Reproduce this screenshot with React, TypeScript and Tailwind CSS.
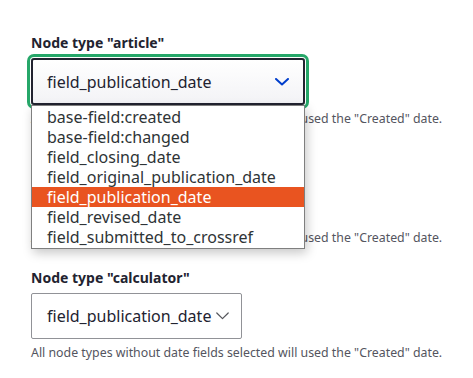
import React from "react";

const font = { fontFamily: '"Noto Sans", "DejaVu Sans", sans-serif' };

const options = [
  "base-field:created",
  "base-field:changed",
  "field_closing_date",
  "field_original_publication_date",
  "field_publication_date",
  "field_revised_date",
  "field_submitted_to_crossref",
];

const desc = 'All node types without date fields selected will used the "Created" date.';

function BlueChevron() {
  return (
    <svg width="14" height="8" viewBox="0 0 14 8" fill="none">
      <path d="M1 1l6 5.5L13 1" stroke="#003ecc" strokeWidth="2" strokeLinecap="round" strokeLinejoin="round" />
    </svg>
  );
}

function GrayChevron() {
  return (
    <svg width="13" height="8" viewBox="0 0 13 8" fill="none">
      <path d="M0.8 1l5.7 5.7L12.2 1" stroke="#55565b" strokeWidth="1.2" strokeLinecap="round" strokeLinejoin="round" />
    </svg>
  );
}

export default function App() {
  return (
    <div className="w-[473px] h-[378px] bg-white overflow-hidden pl-[31px] pt-[34px]" style={font}>
      {/* Item 1 */}
      <div className="flex flex-col">
        <div className="text-[14px] font-bold leading-[18px] text-[#222330]">Node type "article"</div>
        <div className="relative mt-[6px] w-[274px]">
          <div className="h-[47px] rounded-[3px] border-2 border-[#222330] bg-gradient-to-b from-white to-[#f3f3f6] shadow-[0_0_0_1px_#ffffff,0_0_0_4px_#26a769] flex items-center pl-[14px] pr-[14px]">
            <span className="flex-1 text-[16px] leading-[20px] text-[#222330] whitespace-nowrap">field_publication_date</span>
            <BlueChevron />
          </div>
          <div className="absolute left-0 top-[47px] w-[274px] z-10 bg-white border border-[#7f7f7f] py-[1px] shadow-[2px_4px_10px_rgba(0,0,0,0.22)]">
            {options.map((o) => (
              <div
                key={o}
                className={
                  o === "field_publication_date"
                    ? "h-[20px] leading-[20px] pl-[15px] text-[16px] bg-[#e95420] text-white whitespace-nowrap"
                    : "h-[20px] leading-[20px] pl-[15px] text-[16px] text-[#2e3436] whitespace-nowrap"
                }
              >
                {o}
              </div>
            ))}
          </div>
        </div>
        <div className="mt-[6px] text-[12.35px] leading-[16px] text-[#545560] whitespace-nowrap">{desc}</div>
      </div>

      {/* Item 2 (covered by the open list) */}
      <div className="flex flex-col mt-[26px]">
        <div className="h-[18px]" />
        <div className="mt-[6px] w-[211px] h-[47px]" />
        <div className="mt-[6px] text-[12.35px] leading-[16px] text-[#545560] whitespace-nowrap">{desc}</div>
      </div>

      {/* Item 3 */}
      <div className="flex flex-col mt-[23px]">
        <div className="text-[14px] font-bold leading-[18px] text-[#222330]">Node type "calculator"</div>
        <div className="mt-[6px] w-[211px] h-[46px] rounded-[2px] border border-[#919297] bg-white flex items-center pl-[15px] pr-[12px]">
          <span className="flex-1 text-[16px] leading-[20px] text-[#222330] whitespace-nowrap">field_publication_date</span>
          <GrayChevron />
        </div>
        <div className="mt-[6px] text-[12.35px] leading-[16px] text-[#545560] whitespace-nowrap">{desc}</div>
      </div>
    </div>
  );
}
